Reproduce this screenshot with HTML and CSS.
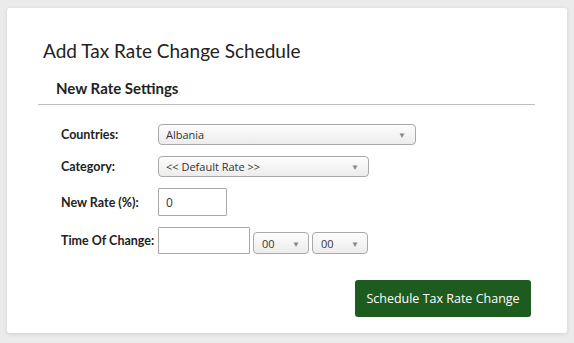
FILE: index.html
```html
<!DOCTYPE html>
<html>
<head>
<meta charset="utf-8">
<link rel="stylesheet" href="styles.css">
</head>
<body>
<div class="card">
  <h1 class="title">Add Tax Rate Change Schedule</h1>
  <div class="section">
    <h2 class="section-head">New Rate Settings</h2>
    <div class="form">
      <label class="label">Countries:</label>
      <div class="select select-wide"><span>Albania</span><span class="arrow">▼</span></div>
      <label class="label">Category:</label>
      <div class="select select-mid"><span>&lt;&lt; Default Rate &gt;&gt;</span><span class="arrow">▼</span></div>
      <label class="label">New Rate (%):</label>
      <div class="input input-rate">0</div>
      <label class="label">Time Of Change:</label>
      <div class="time-row">
        <div class="input input-time"></div>
        <div class="select select-small"><span>00</span><span class="arrow">▼</span></div>
        <div class="select select-small"><span>00</span><span class="arrow">▼</span></div>
      </div>
    </div>
  </div>
  <div class="actions">
    <button class="btn">Schedule Tax Rate Change</button>
  </div>
</div>
</body>
</html>
```

FILE: styles.css
```css
html, body {
  margin: 0;
  padding: 0;
}
body {
  background: #ebebeb;
  font-family: Lato, "Open Sans", sans-serif;
  color: #222;
  width: 574px;
  height: 343px;
  overflow: hidden;
}
.card {
  margin: 8px 7px 0 7px;
  width: 560px;
  height: 325px;
  box-sizing: border-box;
  background: #fff;
  border-radius: 3px;
  box-shadow: 0 1px 4px rgba(0,0,0,0.12);
  padding: 31px 32px 0 31px;
}
.title {
  margin: 0 0 0 5px;
  font-weight: 400;
  font-size: 19px;
  line-height: 24px;
  color: #222;
}
.section-head {
  margin: 15px 0 0 0;
  padding: 0 0 6px 18px;
  font-size: 15px;
  font-weight: 700;
  line-height: 20px;
  border-bottom: 1px solid #bdbdbd;
  color: #222;
}
.form {
  display: grid;
  grid-template-columns: 97px auto;
  justify-items: start;
  align-items: center;
  row-gap: 11px;
  margin: 19px 0 0 23px;
}
.label {
  font-size: 12.5px;
  font-weight: 700;
  color: #222;
}
.select {
  box-sizing: border-box;
  height: 21px;
  border: 1px solid #a9a9a9;
  border-radius: 4px;
  background: linear-gradient(#fdfdfd, #ececec);
  display: flex;
  align-items: center;
  justify-content: space-between;
  padding: 0 9px 0 7px;
  font-family: "Open Sans", sans-serif;
  font-size: 11px;
  color: #333;
}
.arrow {
  font-size: 8px;
  color: #888;
}
.select-wide { width: 258px; }
.select-mid { width: 211px; }
.select-small { width: 56px; height: 22px; padding: 0 8px 0 8px; }
.input {
  box-sizing: border-box;
  border: 1px solid #a9a9a9;
  border-radius: 1px;
  background: #fff;
  font-family: "Open Sans", sans-serif;
  font-size: 12px;
  color: #333;
  display: flex;
  align-items: center;
  padding-left: 7px;
}
.input-rate { width: 69px; height: 28px; }
.input-time { width: 92px; height: 27px; }
.time-row {
  display: flex;
  align-items: flex-end;
  gap: 3px;
}
.actions {
  display: flex;
  justify-content: flex-end;
  margin-top: 26px;
  margin-right: 4px;
}
.btn {
  width: 176px;
  height: 37px;
  background: #1e5b1f;
  color: #fff;
  border: none;
  border-radius: 3px;
  font-family: "Open Sans", sans-serif;
  font-size: 12.5px;
  padding: 0;
}
```
